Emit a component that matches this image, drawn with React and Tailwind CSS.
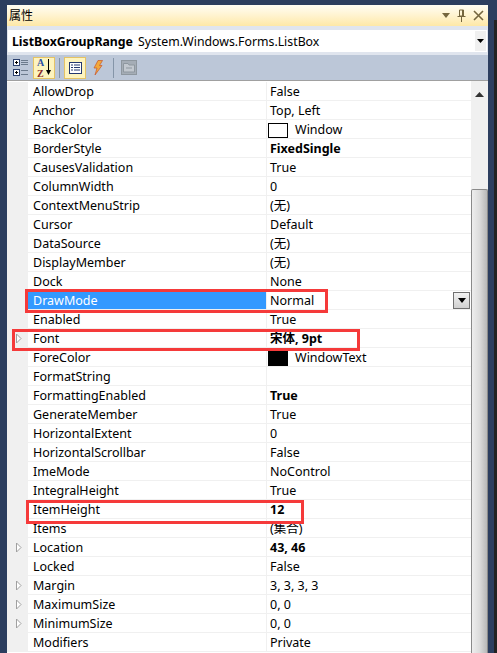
import React from 'react'

const rows = [
    { name: 'AllowDrop', value: 'False' },
    { name: 'Anchor', value: 'Top, Left' },
    { name: 'BackColor', value: 'Window', swatch: 'white' },
    { name: 'BorderStyle', value: 'FixedSingle', bold: true },
    { name: 'CausesValidation', value: 'True' },
    { name: 'ColumnWidth', value: '0' },
    { name: 'ContextMenuStrip', value: '(无)' },
    { name: 'Cursor', value: 'Default' },
    { name: 'DataSource', value: '(无)' },
    { name: 'DisplayMember', value: '(无)' },
    { name: 'Dock', value: 'None' },
    { name: 'DrawMode', value: 'Normal', selected: true },
    { name: 'Enabled', value: 'True' },
    { name: 'Font', value: '宋体, 9pt', bold: true, expand: true },
    { name: 'ForeColor', value: 'WindowText', swatch: 'black' },
    { name: 'FormatString', value: '' },
    { name: 'FormattingEnabled', value: 'True', bold: true },
    { name: 'GenerateMember', value: 'True' },
    { name: 'HorizontalExtent', value: '0' },
    { name: 'HorizontalScrollbar', value: 'False' },
    { name: 'ImeMode', value: 'NoControl' },
    { name: 'IntegralHeight', value: 'True' },
    { name: 'ItemHeight', value: '12', bold: true },
    { name: 'Items', value: '(集合)' },
    { name: 'Location', value: '43, 46', bold: true, expand: true },
    { name: 'Locked', value: 'False' },
    { name: 'Margin', value: '3, 3, 3, 3', expand: true },
    { name: 'MaximumSize', value: '0, 0', expand: true },
    { name: 'MinimumSize', value: '0, 0', expand: true },
    { name: 'Modifiers', value: 'Private' },
]

const Arrow = () => (
    <svg width="7" height="11" viewBox="0 0 7 11" className="block">
        <path d="M1.5 1 L6 5.5 L1.5 10 Z" fill="white" stroke="#a0a0a0" strokeWidth="1" />
    </svg>
)

const Row = ({ row }) => (
    <div className="flex h-[19px] shrink-0 items-stretch">
        <div className="flex w-[21px] shrink-0 items-center justify-center bg-[#f0f0f0] pl-[2px]">
            {row.expand && <Arrow />}
        </div>
        <div className={`flex w-[238px] shrink-0 items-center border-b border-[#f0f0f0] pl-[5px] pt-[2px] ${row.selected ? 'bg-[#3399ff] text-white' : ''}`}>
            {row.name}
        </div>
        <div className={`relative flex flex-1 items-center border-b border-l border-[#f0f0f0] pl-[3px] pt-[2px] ${row.bold ? 'font-bold' : ''}`}>
            {row.swatch && (
                <span className={`-ml-[2px] mr-[7px] h-[15px] w-5 border border-black ${row.swatch === 'black' ? 'bg-black' : 'bg-white'}`}></span>
            )}
            {row.value}
            {row.selected && (
                <span className="absolute right-[1px] top-[1px] flex h-[17px] w-[17px] items-center justify-center border border-[#707070] bg-gradient-to-b from-[#f2f2f2] to-[#d0d0d0]">
                    <svg width="8" height="5" viewBox="0 0 8 5"><path d="M0 0H8L4 5Z" fill="black" /></svg>
                </span>
            )}
        </div>
    </div>
)

const Toggle = ({ children, active }) => (
    <div className={`flex h-[22px] w-[22px] items-center justify-center ${active ? 'border border-[#e5c365] bg-[#fdf4bf]' : ''}`}>
        {children}
    </div>
)

const Sep = () => <div className="mx-[3px] h-[20px] w-[1px] bg-[#8595a8]"></div>

const Highlight = ({ className }) => (
    <div className={`pointer-events-none absolute border-[3px] border-[#f53a3a] ${className}`}></div>
)

export default function App() {
    return (
        <div className="relative flex h-[653px] w-[497px] overflow-hidden bg-[#2c3e5f] pt-[5px] pl-[7px] pr-[9px] text-[12.5px] text-black" style={{ fontFamily: '"Noto Sans", "Noto Sans CJK SC", sans-serif' }}>
            <div className="absolute right-0 top-[20px] h-full w-[3px] bg-[#222]"></div>
            <div className="flex min-w-0 flex-1 flex-col bg-[#e0e5ee]">
                {/* title */}
                <div className="flex h-[21px] shrink-0 items-center justify-between bg-gradient-to-b from-[#fffdf3] via-[#fff3cf] to-[#fee8a6] pl-[2px] pr-1">
                    <span className="text-[12px]">属性</span>
                    <div className="flex items-center gap-[7px] text-[#75663f]">
                        <svg width="8" height="5" viewBox="0 0 8 5"><path d="M0 0H8L4 5Z" fill="currentColor" /></svg>
                        <svg width="9" height="13" viewBox="0 0 9 13" fill="none" stroke="currentColor">
                            <path d="M2.5 1H6.5V7H2.5ZM5.5 1V7M0.5 7.5H8.5M4.5 8V13" />
                        </svg>
                        <svg width="11" height="11" viewBox="0 0 11 11" fill="none" stroke="currentColor" strokeWidth="1.6"><path d="M1 1L10 10M10 1L1 10" /></svg>
                    </div>
                </div>
                {/* object selector */}
                <div className="shrink-0 px-[1px] pb-[3px] pt-1">
                    <div className="flex h-[22px] items-center justify-between bg-white pl-1 pr-[1px]">
                        <span className="whitespace-nowrap pt-[2px] text-[12.3px]"><b className="mr-[5px]">ListBoxGroupRange</b>System.Windows.Forms.ListBox</span>
                        <div className="flex h-[20px] w-[11px] items-center justify-center bg-[#f0f0f0]">
                            <svg width="7" height="4" viewBox="0 0 7 4"><path d="M0 0H7L3.5 4Z" fill="black" /></svg>
                        </div>
                    </div>
                </div>
                {/* toolbar */}
                <div className="flex h-[26px] shrink-0 items-center gap-[1px] border-b border-[#a0a0a0] bg-[#bcc7d8] pl-[3px]">
                    <Toggle>
                        <svg width="16" height="18" viewBox="0 0 16 18" fill="none">
                            <rect x="0.5" y="0.5" width="6" height="6" fill="white" stroke="#2a3f6e" />
                            <path d="M2 3.5H5M3.5 2V5" stroke="black" />
                            <rect x="0.5" y="10.5" width="6" height="6" fill="white" stroke="#2a3f6e" />
                            <path d="M2 13.5H5M3.5 12V15" stroke="black" />
                            <path d="M8 1.5H15M8 3.5H15M8 5.5H15M8 11.5H15M8 15.5H15" stroke="#6b7a8c" />
                        </svg>
                    </Toggle>
                    <Toggle active>
                        <div className="flex items-center gap-[2px]">
                            <div className="flex flex-col text-[10px] font-bold leading-[11px]" style={{ fontFamily: '"Liberation Serif", serif' }}>
                                <span className="text-[#2a4fa5]">A</span>
                                <span className="text-[#8a2a2a]">Z</span>
                            </div>
                            <svg width="5" height="17" viewBox="0 0 5 17"><path d="M2.5 0V13" stroke="black" /><path d="M0 11H5L2.5 16Z" fill="black" /></svg>
                        </div>
                    </Toggle>
                    <Sep />
                    <Toggle active>
                        <svg width="13" height="12" viewBox="0 0 13 12" fill="none">
                            <rect x="0.5" y="0.5" width="12" height="11" fill="white" stroke="#24386e" />
                            <path d="M2 3H4M5 3H11M2 5.5H4M5 5.5H11M2 8H4M5 8H11" stroke="#24386e" />
                        </svg>
                    </Toggle>
                    <Toggle>
                        <svg width="10" height="16" viewBox="0 0 10 16"><path d="M5 0.5H9.5L6.5 5.5H9L2 15L4 8H1Z" fill="#f2a93b" stroke="#c9542a" strokeWidth="0.7" /></svg>
                    </Toggle>
                    <Sep />
                    <Toggle>
                        <svg width="16" height="15" viewBox="0 0 16 15" fill="none">
                            <rect x="0.5" y="0.5" width="15" height="14" fill="#a5adb6" stroke="#8e979f" />
                            <path d="M2.5 3.5H7L8 5H13.5V12H2.5Z" fill="#c2c8cf" stroke="#8e979f" />
                            <path d="M5 8H11" stroke="#8e979f" />
                        </svg>
                    </Toggle>
                </div>
                {/* grid */}
                <div className="flex min-h-0 flex-1 bg-white">
                    <div className="flex min-w-0 flex-1 flex-col overflow-hidden pt-[1px]">
                        {rows.map((row) => (
                            <Row key={row.name} row={row} />
                        ))}
                    </div>
                    <div className="flex w-[17px] shrink-0 flex-col bg-[#f0f0f0]">
                        <div className="flex h-[27px] shrink-0 items-center justify-center">
                            <svg width="9" height="5" viewBox="0 0 9 5"><path d="M0 5H9L4.5 0Z" fill="#333" /></svg>
                        </div>
                        <div className="mt-[81px] flex-1 rounded-t-[2px] border-x border-t border-[#8a8a8a] bg-gradient-to-r from-[#eeeeee] via-[#dcdcdc] to-[#b8b8b8]"></div>
                    </div>
                </div>
            </div>
            <Highlight className="left-[25px] top-[289px] h-[24px] w-[303px]" />
            <Highlight className="left-[12px] top-[329px] h-[22px] w-[348px]" />
            <Highlight className="left-[26px] top-[500px] h-[24px] w-[278px]" />
        </div>
    )
}
